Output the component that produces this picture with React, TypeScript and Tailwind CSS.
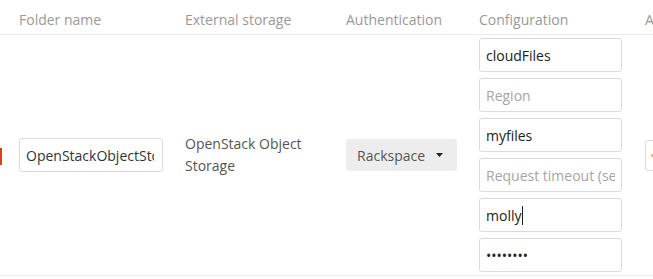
const cols = "grid grid-cols-[19px_166px_161px_133px_166px_1fr]";

function Field({
  value,
  placeholder,
  type = "text",
}: {
  value?: string;
  placeholder?: string;
  type?: string;
}) {
  return (
    <input
      type={type}
      defaultValue={value}
      placeholder={placeholder}
      className="w-[143px] h-[34px] px-[6px] rounded-[3px] border border-[#dbdbdb] bg-white text-[#222] placeholder:text-[#a5a5a5] outline-none"
    />
  );
}

export default function App() {
  return (
    <div className="w-[653px] h-[279px] overflow-hidden bg-white font-['Open_Sans',sans-serif] text-[14px]">
      <div className={`${cols} h-[35px] border-b border-[#ebebeb] items-center pt-[4px] text-[#999] whitespace-nowrap`}>
        <div />
        <div>Folder name</div>
        <div>External storage</div>
        <div>Authentication</div>
        <div>Configuration</div>
        <div>Available for</div>
      </div>
      <div className={`${cols} items-center py-[3px] border-b border-[#ebebeb]`}>
        <div className="self-center h-[17px] w-[2px] mt-[2px] bg-[#dd4216]" />
        <div>
          <input
            type="text"
            defaultValue="OpenStackObjectStorage"
            className="w-[144px] h-[34px] pl-[6px] pr-[8px] rounded-[3px] border border-[#dbdbdb] bg-white text-[#333] outline-none"
          />
        </div>
        <div className="w-[140px] leading-[22px] text-[#555]">OpenStack Object Storage</div>
        <div>
          <button className="flex items-center h-[32px] w-[111px] pl-[11px] pr-[14px] rounded-[3px] bg-[#ededed] text-[#555]">
            <span>Rackspace</span>
            <svg className="ml-auto" width="7" height="4" viewBox="0 0 7 4">
              <path d="M0 0h7L3.5 4z" fill="#222" />
            </svg>
          </button>
        </div>
        <div className="flex flex-col gap-[6px]">
          <Field value="cloudFiles" />
          <Field placeholder="Region" />
          <Field value="myfiles" />
          <Field placeholder="Request timeout (seconds)" />
          <div className="relative">
            <Field value="molly" />
            <span className="absolute left-[43px] top-[8px] h-[19px] w-[1px] bg-[#222]" />
          </div>
          <Field value="password" type="password" />
        </div>
        <div>
          <div className="h-[31px] w-[30px] rounded-[3px] border border-[#dbdbdb] flex items-center pl-[5px]">
            <span className="w-[2px] h-[3px] bg-[#e8b98a]" />
          </div>
        </div>
      </div>
    </div>
  );
}
